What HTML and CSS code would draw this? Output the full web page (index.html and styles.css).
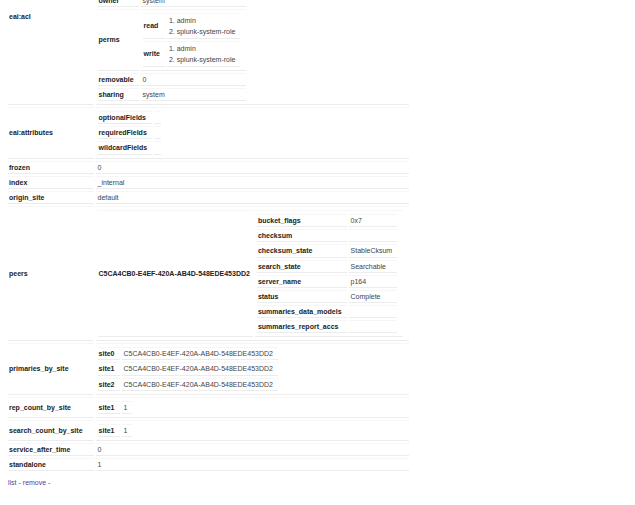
FILE: index.html
```html
<!DOCTYPE html>
<html>
<head>
<meta charset="utf-8">
<title>peers</title>
<link rel="stylesheet" href="styles.css">
</head>
<body>
<table class="feed top">
  <tr>
    <td class="k">eai:acl</td>
    <td class="v">
      <table class="feed">
        <tr><td class="k">app</td><td>system</td></tr>
        <tr><td class="k">can_list</td><td>1</td></tr>
        <tr><td class="k">can_write</td><td>1</td></tr>
        <tr><td class="k">modifiable</td><td>0</td></tr>
        <tr><td class="k">owner</td><td>system</td></tr>
        <tr>
          <td class="k">perms</td>
          <td class="v">
            <table class="feed">
              <tr><td class="k">read</td><td><ol class="list"><li>admin</li><li>splunk-system-role</li></ol></td></tr>
              <tr><td class="k">write</td><td><ol class="list"><li>admin</li><li>splunk-system-role</li></ol></td></tr>
            </table>
          </td>
        </tr>
        <tr><td class="k">removable</td><td>0</td></tr>
        <tr><td class="k">sharing</td><td>system</td></tr>
      </table>
    </td>
  </tr>
  <tr>
    <td class="k">eai:attributes</td>
    <td class="v">
      <table class="feed">
        <tr><td class="k">optionalFields</td><td></td></tr>
        <tr><td class="k">requiredFields</td><td></td></tr>
        <tr><td class="k">wildcardFields</td><td></td></tr>
      </table>
    </td>
  </tr>
  <tr><td class="k">frozen</td><td>0</td></tr>
  <tr><td class="k">index</td><td>_internal</td></tr>
  <tr><td class="k">origin_site</td><td>default</td></tr>
  <tr>
    <td class="k">peers</td>
    <td class="v">
      <table class="feed">
        <tr>
          <td class="k guid">C5CA4CB0-E4EF-420A-AB4D-548EDE453DD2</td>
          <td class="v">
            <table class="feed">
              <tr><td class="k">bucket_flags</td><td>0x7</td></tr>
              <tr><td class="k">checksum</td><td></td></tr>
              <tr><td class="k">checksum_state</td><td>StableCksum</td></tr>
              <tr><td class="k">search_state</td><td>Searchable</td></tr>
              <tr><td class="k">server_name</td><td>p164</td></tr>
              <tr><td class="k">status</td><td>Complete</td></tr>
              <tr><td class="k">summaries_data_models</td><td></td></tr>
              <tr><td class="k">summaries_report_accs</td><td></td></tr>
            </table>
          </td>
        </tr>
      </table>
    </td>
  </tr>
  <tr>
    <td class="k">primaries_by_site</td>
    <td class="v">
      <table class="feed">
        <tr><td class="k">site0</td><td>C5CA4CB0-E4EF-420A-AB4D-548EDE453DD2</td></tr>
        <tr><td class="k">site1</td><td>C5CA4CB0-E4EF-420A-AB4D-548EDE453DD2</td></tr>
        <tr><td class="k">site2</td><td>C5CA4CB0-E4EF-420A-AB4D-548EDE453DD2</td></tr>
      </table>
    </td>
  </tr>
  <tr>
    <td class="k">rep_count_by_site</td>
    <td class="v">
      <table class="feed">
        <tr><td class="k">site1</td><td>1</td></tr>
      </table>
    </td>
  </tr>
  <tr>
    <td class="k">search_count_by_site</td>
    <td class="v">
      <table class="feed">
        <tr><td class="k">site1</td><td>1</td></tr>
      </table>
    </td>
  </tr>
  <tr><td class="k">service_after_time</td><td>0</td></tr>
  <tr><td class="k">standalone</td><td>1</td></tr>
</table>
<p class="links"><a href="#list">list</a> - <a href="#remove">remove</a> - </p>
</body>
</html>
```
FILE: styles.css
```css
html, body {
  background: #fff;
}
body {
  margin: -73px 0 0 6px;
  font-family: "Liberation Sans", Arial, sans-serif;
  font-size: 7px;
  color: #444;
}
.feed {
  border-collapse: separate;
  border-spacing: 2px;
}
.feed td {
  padding: 1px 5px 1px 2px;
  line-height: 9.15px;
  border-top: 1px solid #f6f6f6;
  border-bottom: 1px solid #ececec;
  vertical-align: middle;
  text-align: left;
}
.feed td.v {
  padding: 1px 4px 1px 0;
}
.feed td.k {
  padding-left: 1px;
  font-weight: bold;
  color: #222;
}
.top > tbody > tr > td.k {
  padding-right: 11px;
}
.feed td.guid {
  padding-right: 3px;
}
.list {
  margin: 0;
  padding: 0;
  list-style-position: inside;
}
.list li {
  line-height: 11px;
}
.links {
  margin: 6px 0 0 2px;
  font-size: 7px;
}
.links a {
  color: #60399a;
}
```
